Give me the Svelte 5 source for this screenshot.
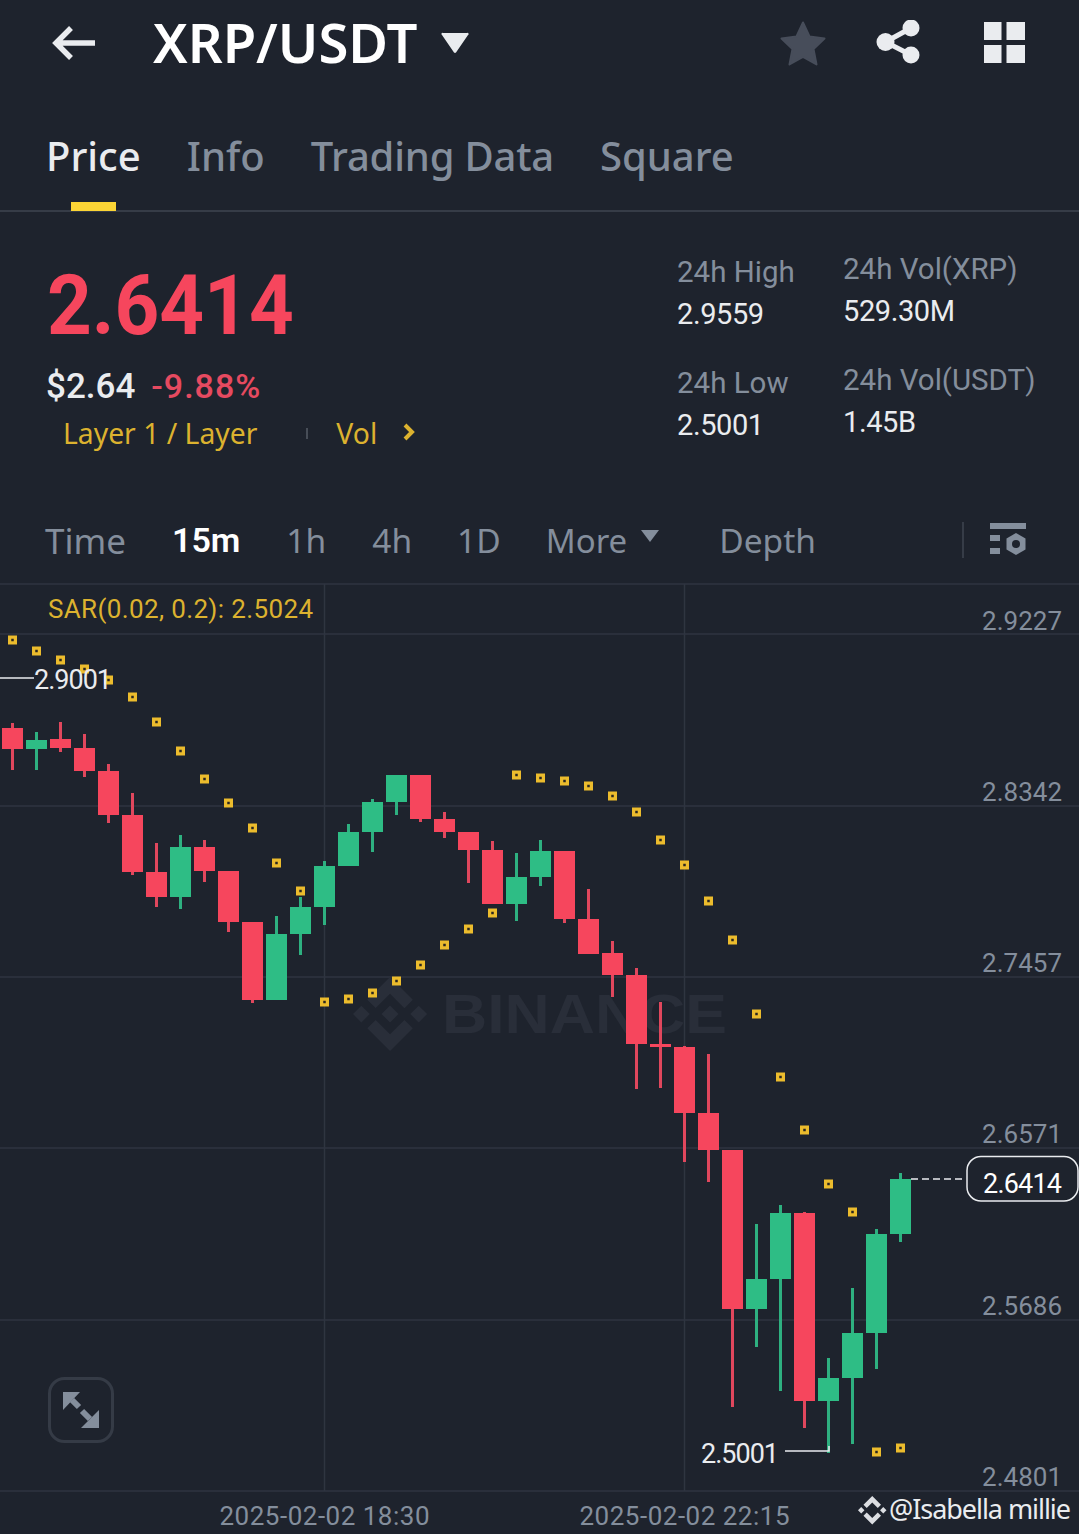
<script>
  // [open-top, bottom, wickTop, wickBottom, up?]
  const candles = [
    [728,749,723,770,0],[740,749,732,770,1],[739,748,722,752,0],[748,771,734,777,0],
    [771,815,764,823,0],[815,872,793,875,0],[872,897,843,907,0],[847,897,835,909,1],
    [847,871,840,882,0],[871,922,871,932,0],[922,1000,922,1003,0],[934,1000,916,1000,1],
    [907,934,897,955,1],[866,907,861,925,1],[832,866,824,866,1],[802,832,799,852,1],
    [775,802,775,815,1],[775,819,775,822,0],[819,832,812,838,0],[832,850,832,883,0],
    [850,904,841,904,0],[877,904,853,921,1],[851,877,840,886,1],[851,919,851,923,0],
    [919,954,889,954,0],[953,975,941,997,0],[975,1044,968,1089,0],[1044,1047,1002,1088,0],
    [1047,1113,1046,1162,0],[1113,1150,1054,1182,0],[1150,1309,1150,1407,0],[1279,1309,1224,1347,1],
    [1213,1279,1205,1391,1],[1213,1401,1212,1428,0],[1378,1401,1358,1453,1],[1333,1378,1288,1444,1],
    [1234,1333,1229,1369,1],[1179,1234,1173,1242,1]
  ];
  const sar = [640,651,660,669,680,697,722,751,779,803,828,863,891,1002,999,993,981,965,945,929,913,775,778,781,786,796,812,840,865,901,940,1014,1077,1130,1184,1212,1452,1448];
  const cx = (i) => 12.5 + 24 * i;
  const gridY = [584,634,806,977,1148,1320,1491];
  const axis = [['2.9227',630],['2.8342',801],['2.7457',972],['2.6571',1143],['2.5686',1315],['2.4801',1486]];
  const chevrons = "M38.73 53.2l24.59-24.58 24.6 24.6 14.3-14.31L63.32 0 24.42 38.9zM0 63.31l14.3-14.31 14.31 14.31-14.31 14.3zM38.73 73.41l24.59 24.59 24.6-24.6 14.31 14.29-38.9 38.91-38.91-38.88zM98 63.31l14.3-14.31 14.31 14.3-14.31 14.31z";
  const centre = "M77.83 63.3L63.32 48.78 48.81 63.28l14.51 14.5z";
</script>

<div class="page">
  <header class="top">
    <svg class="back" width="46" height="40" viewBox="0 0 46 40"><path d="M44 20H6M20 5L5 20l15 15" fill="none" stroke="#eaecef" stroke-width="5.5"/></svg>
    <h1 class="pair">XRP/USDT</h1>
    <svg class="caret" width="28" height="22" viewBox="0 0 28 22"><path d="M2 1h24a1 1 0 0 1 1 2L15 20.500a1.500 1.500 0 0 1-2 0L1 3a1 1 0 0 1 1-2z" fill="#eaecef"/></svg>
    <div class="actions">
      <svg width="48" height="48" viewBox="0 0 48 48"><path d="M24 3.500l6.500 14 15 2-11 10.500 3 15.500L24 38l-13.500 7.500 3-15.500-11-10.500 15-2z" fill="#474d5a" stroke="#474d5a" stroke-width="2" stroke-linejoin="round"/></svg>
      <svg class="share" width="46" height="46" viewBox="0 0 46 46"><path d="M35 8L9.500 22 35 35" fill="none" stroke="#eaecef" stroke-width="5"/><circle cx="35" cy="8" r="8.500" fill="#eaecef"/><circle cx="9.500" cy="22" r="9" fill="#eaecef"/><circle cx="35" cy="35" r="8.500" fill="#eaecef"/></svg>
      <svg width="41" height="41" viewBox="0 0 41 41"><path d="M0 0h17.500v18H0zM22.500 0H41v18H22.500zM0 23h17.500v18H0zM22.500 23H41v18H22.500z" fill="#eaecef"/></svg>
    </div>
  </header>

  <nav class="tabs">
    <span class="tab active">Price</span>
    <span class="tab">Info</span>
    <span class="tab td">Trading Data</span>
    <span class="tab">Square</span>
  </nav>

  <section class="stats">
    <div class="left">
      <div class="price">2.6414</div>
      <div class="sub"><span class="usd">$2.64</span><span class="pct">-9.88%</span></div>
      <div class="tags">
        <span>Layer 1 / Layer</span>
        <i class="sep"></i>
        <span>Vol</span>
        <svg width="14" height="18" viewBox="0 0 14 18"><path d="M3 2l7 7-7 7" fill="none" stroke="#dcb22f" stroke-width="4"/></svg>
      </div>
    </div>
    <div class="right">
      <div class="col c1">
        <div class="label">24h High</div><div class="val">2.9559</div>
        <div class="label gap">24h Low</div><div class="val">2.5001</div>
      </div>
      <div class="col c2">
        <div class="label">24h Vol(XRP)</div><div class="val">529.30M</div>
        <div class="label gap">24h Vol(USDT)</div><div class="val">1.45B</div>
      </div>
    </div>
  </section>

  <div class="intervals">
    <span class="iv iv-time">Time</span>
    <span class="iv on">15m</span>
    <span class="iv">1h</span>
    <span class="iv">4h</span>
    <span class="iv d1">1D</span>
    <span class="iv more">More<svg width="20" height="14" viewBox="0 0 20 14"><path d="M1 1h18l-9 12z" fill="#848e9c"/></svg></span>
    <span class="iv">Depth</span>
    <div class="tools">
      <i class="vline"></i>
      <svg width="38" height="36" viewBox="0 0 38 36"><path d="M1 1h36v6H1zM1 13h10v6H1zM1 26h10v6H1z" fill="#848e9c"/><path d="M27 11l9.500 5.500v11L27 33l-9.500-5.500v-11z" fill="#848e9c"/><circle cx="27" cy="22" r="4" fill="#1e232d"/></svg>
    </div>
  </div>

  <svg class="chart" width="1079" height="951" viewBox="0 583 1079 951">
    <line x1="324.500" x2="324.500" y1="584" y2="1491" class="grid"/>
    <line x1="684.500" x2="684.500" y1="584" y2="1491" class="grid"/>
    {#each gridY as y}<line x1="0" x2="1079" y1={y} y2={y} class="grid"/>{/each}

    <path d={chevrons + centre} transform="translate(353 977) scale(0.585)" class="wm"/>
    <text x="442" y="1033" class="wmtext" textLength="285" lengthAdjust="spacingAndGlyphs">BINANCE</text>

    <text x="48" y="618" class="sarlabel" textLength="265">SAR(0.02, 0.2): 2.5024</text>

    {#each candles as c, i}
      <rect x={cx(i) - 1.5} width="3" y={c[2]} height={c[3] - c[2]} class={c[4] ? 'gw' : 'rw'}/>
      <rect x={cx(i) - 10.5} width="21" y={c[0]} height={c[1] - c[0]} class={c[4] ? 'g' : 'r'}/>
    {/each}

    {#each sar as y, i}
      <rect x={cx(i) - 4.5} y={y - 4.500} width="9" height="9" class="dot"/>
      <rect x={cx(i) - 1.25} y={y - 1.250} width="2.500" height="2.500" class="dotc"/>
    {/each}

    <line x1="0" x2="34" y1="678" y2="678" class="mark"/>
    <text x="34" y="689" class="marktext" textLength="78">2.9001</text>
    <path d="M785 1451h44v-5" fill="none" class="mark"/>
    <text x="701" y="1463" class="marktext" textLength="78">2.5001</text>

    {#each axis as [t, y]}<text x="1062" y={y} text-anchor="end" class="axis">{t}</text>{/each}
    <text x="324.500" y="1525" text-anchor="middle" class="axis" textLength="210">2025-02-02 18:30</text>
    <text x="684.500" y="1525" text-anchor="middle" class="axis" textLength="210">2025-02-02 22:15</text>

    <line x1="911" x2="966" y1="1179" y2="1179" class="dash"/>
    <rect x="967" y="1156.500" width="111" height="44.500" rx="14" class="tag"/>
    <text x="983" y="1193" class="tagtext" textLength="79">2.6414</text>

    <rect x="49.500" y="1378.500" width="63" height="63" rx="15" class="btn"/>
    <path d="M63 1392h17l-17 18zM99 1428H81l18-18z" class="exp"/>
    <path d="M72 1400l7 7M82 1411l8 8" class="expl"/>

    <path d={chevrons} transform="translate(858 1496) scale(0.225)" class="credit"/>
    <text x="889" y="1519" class="credittext" textLength="182">@Isabella millie</text>
  </svg>
</div>

<style>
  :global(body) { margin: 0; background: #1e232d; }
  .page {
    width: 1079px;
    height: 1534px;
    overflow: hidden;
    background: #1e232d;
    color: #eaecef;
    font-family: "Noto Sans", "Liberation Sans", sans-serif;
  }
  .top { display: flex; align-items: center; height: 86px; padding-left: 51px; }
  .back { flex: none; }
  .pair {
    margin: -2px 0 0 56px;
    font-size: 54.400px;
    font-weight: 600;
    line-height: 86px;
    color: #fff;
  }
  .caret { margin-left: 23px; }
  .actions { display: flex; align-items: center; margin-left: auto; padding-right: 54px; gap: 49px; }
  .actions .share { margin-right: 13px; }
  .actions svg:nth-child(3) { margin-top: -2px; }

  .tabs { display: flex; height: 124px; border-bottom: 2px solid #363c47; padding-left: 46px; gap: 46px; }
  .tab { font-size: 40px; line-height: 139px; height: 124px; color: #848e9c; font-weight: 500; position: relative; }
  .tab.td { letter-spacing: -0.2px; }
  .tab.active { color: #eaecef; }
  .tab.active::after {
    content: "";
    position: absolute;
    left: 25px;
    width: 45px;
    bottom: -1px;
    height: 9px;
    background: #fcd535;
  }

  .stats { display: flex; height: 287px; }
  .left { padding-left: 47px; width: 677px; box-sizing: border-box; }
  .price {
    font-family: Roboto, sans-serif;
    font-size: 84px;
    font-weight: 700;
    line-height: 96px;
    margin-top: 46px;
    color: #f6465d;
    transform: scaleX(0.93);
    transform-origin: left center;
  }
  .sub { display: flex; align-items: center; height: 44px; margin-top: 10px; font-family: Roboto, sans-serif; font-size: 35px; gap: 16px; margin-left: -1px; }
  .usd { font-weight: 500; color: #eaecef; }
  .pct { color: #e64a60; font-weight: 500; font-size: 34px; letter-spacing: 1px; }
  .tags { display: flex; align-items: center; height: 46px; margin-top: 2px; padding-left: 16px; color: #dcb22f; font-size: 28.300px; }
  .sep { width: 2px; height: 11px; background: #474d57; margin: 0 28px 0 49px; }
  .tags svg { margin-left: 25px; margin-top: -2px; }

  .right { display: flex; }
  .col { font-family: Roboto, sans-serif; }
  .c1 { width: 166px; padding-top: 39px; }
  .c2 { padding-top: 36px; }
  .label { font-size: 29.500px; line-height: 42px; color: #848e9c; white-space: nowrap; }
  .val { font-size: 29px; line-height: 43px; color: #eaecef; letter-spacing: -0.4px; }
  .gap { margin-top: 26px; }

  .intervals { display: flex; align-items: center; height: 84px; padding: 0 0 2px 45px; box-sizing: border-box; font-size: 33.500px; color: #848e9c; }
  .iv { margin-right: 46px; white-space: nowrap; display: flex; align-items: center; }
  .iv.on { color: #fff; font-weight: 600; font-family: Roboto, sans-serif; font-size: 34px; }
  .iv-time { font-size: 35px; }
  .d1 { margin-left: -1px; margin-right: 45px; }
  .more { margin-right: 59px; font-size: 33px; }
  .more svg { margin-left: 13px; margin-top: -8px; }
  .tools { margin-left: auto; display: flex; align-items: center; padding-right: 52px; gap: 25px; }
  .vline { width: 2px; height: 36px; background: #363c47; }

  .chart { display: block; font-family: Roboto, sans-serif; }
  .grid { stroke: #2f3540; stroke-width: 1.5; }
  .wm { fill: #292e39; }
  .wmtext { font-family: "Liberation Sans", sans-serif; font-weight: 700; font-size: 56px; fill: #292e39; }
  .sarlabel { font-size: 26px; fill: #dcb22f; }
  .r { fill: #f6465d; }
  .g { fill: #2ebd85; }
  .rw { fill: #e0475d; }
  .gw { fill: #2eb080; }
  .dot { fill: #ecbc2d; }
  .dotc { fill: #2a2620; }
  .mark { stroke: #eaecef; stroke-width: 1.5; fill: none; }
  .marktext { font-size: 27px; fill: #eaecef; }
  .axis { font-size: 26px; fill: #848e9c; }
  .dash { stroke: #eaecef; stroke-width: 1.5; stroke-dasharray: 7 4; }
  .tag { fill: #1e232d; stroke: #eaecef; stroke-width: 1.5; }
  .tagtext { font-size: 27px; fill: #fff; }
  .btn { fill: none; stroke: #353b46; stroke-width: 3; }
  .exp { fill: #848e9c; }
  .expl { stroke: #848e9c; stroke-width: 6; fill: none; }
  .credit { fill: #dcdee2; }
  .credittext { font-family: "Noto Sans", sans-serif; font-size: 27px; fill: #eaecef; }
</style>
